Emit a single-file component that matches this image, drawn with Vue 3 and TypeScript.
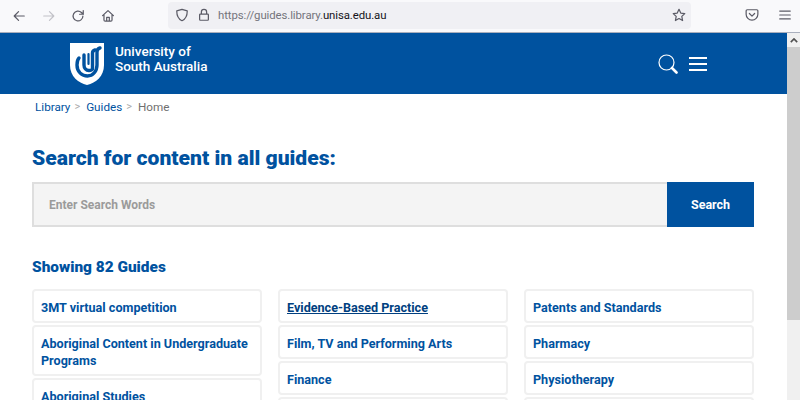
<script setup lang="ts">
const columns: string[][] = [
  ['3MT virtual competition', 'Aboriginal Content in Undergraduate Programs', 'Aboriginal Studies'],
  ['Evidence-Based Practice', 'Film, TV and Performing Arts', 'Finance', 'Fine Arts'],
  ['Patents and Standards', 'Pharmacy', 'Physiotherapy', 'Planning'],
]
</script>

<template>
  <div class="window">
    <div class="toolbar">
      <div class="nav">
        <svg class="ic" viewBox="0 0 16 16"><path d="M14 8H2.500M7.500 3 2.500 8l5 5" /></svg>
        <svg class="ic dim" viewBox="0 0 16 16"><path d="M2 8h11.500M8.500 3l5 5-5 5" /></svg>
        <svg class="ic" viewBox="0 0 16 16"><path d="M13.600 8a5.600 5.600 0 1 1-1.700-4L14 6M14 1.800V6H9.800" /></svg>
        <svg class="ic" viewBox="0 0 16 16"><path d="M1.800 7.600 8 1.800l6.200 5.800M3.400 6.400v6.200c0 .8.500 1.300 1.300 1.300h6.600c.8 0 1.300-.5 1.300-1.300V6.400M6.500 13.800V9.500h3v4.300" /></svg>
      </div>
      <div class="urlbar">
        <svg class="ic shield" viewBox="0 0 16 16"><path d="M8 1.500 14 3.300c0 5.500-1.800 9.200-6 11.200-4.200-2-6-5.700-6-11.200Z" /></svg>
        <svg class="ic lock" viewBox="0 0 16 16"><path d="M5 7V4.500a3 3 0 0 1 6 0V7M3.800 7h8.400c.5 0 .8.300.8.800v5.400c0 .5-.3.800-.8.800H3.800c-.5 0-.8-.3-.8-.8V7.800c0-.5.300-.8.800-.8Z" /></svg>
        <span class="url"><span class="url-dim">https://guides.library.</span>unisa.edu.au</span>
        <svg class="ic star" viewBox="0 0 16 16"><path d="m8 1.500 2 4.300 4.600.6-3.400 3.200.9 4.700L8 12l-4.100 2.300.9-4.700L1.400 6.400 6 5.800Z" /></svg>
      </div>
      <div class="tools">
        <svg class="ic" viewBox="0 0 16 16"><path d="M2.500 2h11c.8 0 1.200.5 1.200 1.200V7c0 3.800-3 6.800-6.700 6.800S1.300 10.800 1.300 7V3.200C1.300 2.500 1.700 2 2.500 2ZM5 6.300l3 3 3-3" /></svg>
        <svg class="ic" viewBox="0 0 16 16"><path d="M2 3.500h12M2 8h12M2 12.500h12" /></svg>
      </div>
    </div>
    <div class="viewport">
      <div class="page">
        <header class="banner">
          <div class="brand">
            <svg class="logo" viewBox="0 0 34 42">
              <path class="shield-mark" d="M0 0H34V22C34 33 26 40 17 42 8 40 0 33 0 22Z" />
              <path class="u-mark" d="M9 15C7 17 7 19 7 22 7 29 12 33 17.500 33 23 33 27 28 27 22V9C27 7 28 5.500 30 5" />
              <path class="u-mark" d="M14 12V22C14 25 16 27.500 19 27.500 20.500 27.500 22 27 22.500 26V10C22.500 8.500 23 7.500 25 7" />
              <path class="u-mark thin" d="M18.500 11V21" />
            </svg>
            <div class="brand-name">University of<br />South Australia</div>
          </div>
          <div class="banner-actions">
            <svg class="banner-search" viewBox="0 0 20 20">
              <circle cx="8.500" cy="8.500" r="7.500" />
              <path class="handle" d="M14 14l4.500 4.500" />
            </svg>
            <div class="burger"><i></i><i></i><i></i></div>
          </div>
        </header>

        <nav class="crumbs">
          <a>Library</a><span class="sep">&gt;</span>
          <a>Guides</a><span class="sep">&gt;</span>
          <span class="here">Home</span>
        </nav>

        <main class="content">
          <h1>Search for content in all guides:</h1>
          <div class="search">
            <div class="field">Enter Search Words</div>
            <div class="go">Search</div>
          </div>
          <h2>Showing 82 Guides</h2>
          <div class="grid">
            <div v-for="(col, i) in columns" :key="i" class="col">
              <a
                v-for="(g, j) in col"
                :key="g"
                class="card"
                :class="{ hot: i === 1 && j === 0 }"
              ><span>{{ g }}</span></a>
            </div>
          </div>
        </main>
      </div>
      <aside class="scrollbar">
        <div class="arrow">
          <svg viewBox="0 0 10 6"><path d="M1 5l4-4 4 4" /></svg>
        </div>
        <div class="thumb"></div>
      </aside>
    </div>
  </div>
</template>

<style>
html, body { margin: 0; overflow: hidden; }
</style>

<style scoped>
.window {
  width: 800px;
  height: 400px;
  display: flex;
  flex-direction: column;
  overflow: hidden;
  background: #fff;
  font-family: Roboto, sans-serif;
}
.toolbar {
  height: 32px;
  flex: none;
  display: flex;
  align-items: center;
  background: #f9f9fb;
  border-bottom: 1px solid #a9afbd;
}
.ic {
  width: 14px;
  height: 14px;
  fill: none;
  stroke: #5b5b66;
  stroke-width: 1.400;
  stroke-linecap: round;
  stroke-linejoin: round;
}
.ic.dim { stroke: #c2c2c8; }
.nav {
  display: flex;
  align-items: center;
  gap: 15.500px;
  padding-left: 12px;
  width: 168px;
  box-sizing: border-box;
  margin-top: -1px;
}
.urlbar {
  width: 523px;
  height: 27px;
  margin-top: -2px;
  flex: none;
  display: flex;
  align-items: center;
  background: #f0f0f4;
  border-radius: 4px;
  box-sizing: border-box;
  padding: 0 5px 0 7px;
}
.shield { margin-right: 8px; }
.lock { margin-right: 7px; }
.url {
  flex: 1;
  font: 11.400px Roboto, sans-serif;
  letter-spacing: -0.100px;
  color: #15141a;
}
.url-dim { color: #74747c; }
.tools {
  display: flex;
  align-items: center;
  gap: 19px;
  padding-left: 54px;
  margin-top: -2px;
}
.viewport {
  flex: 1;
  display: flex;
  min-height: 0;
}
.page {
  flex: 1;
  min-width: 0;
  overflow: hidden;
}
.banner {
  height: 61px;
  background: #00529f;
  display: flex;
  align-items: center;
  justify-content: space-between;
  padding: 0 80px 0 70px;
}
.brand {
  display: flex;
  align-items: center;
  gap: 11px;
}
.logo {
  width: 34px;
  height: 42px;
  display: block;
}
.shield-mark { fill: #fff; }
.u-mark {
  fill: none;
  stroke: #00529f;
  stroke-width: 3.400;
  stroke-linecap: round;
}
.u-mark.thin { stroke-width: 2.200; }
.brand-name {
  color: #fff;
  font: 500 13.500px/15.500px Roboto, sans-serif;
  margin-bottom: 9px;
}
.banner-actions {
  display: flex;
  align-items: center;
  gap: 11px;
}
.banner-search {
  width: 20px;
  height: 20px;
  fill: none;
  stroke: #fff;
  stroke-width: 1.200;
}
.handle { stroke-width: 2.600; stroke-linecap: round; }
.burger {
  width: 18px;
  display: flex;
  flex-direction: column;
  gap: 4px;
}
.burger i {
  display: block;
  height: 2px;
  background: #fff;
}
.crumbs {
  height: 24px;
  padding: 1px 0 0 35px;
  box-sizing: border-box;
  display: flex;
  align-items: center;
  font-size: 11.700px;
  color: #00529f;
}
.sep { color: #a9a9a9; margin: 0 6px 0 4px; font-size: 11px; }
.here { color: #6f6f6f; }
.content { padding: 0 33px 0 32px; }
h1 {
  margin: 26px 0 0;
  font: 900 21.100px/28px Roboto, sans-serif;
  color: #00529f;
}
.search {
  display: flex;
  height: 45px;
  margin-top: 10px;
}
.field {
  flex: 1;
  background: #f4f4f4;
  border: 2px solid #dedede;
  border-right: none;
  padding-left: 15px;
  display: flex;
  align-items: center;
  font-size: 12px;
  font-weight: 700;
  color: #9b9b9b;
}
.go {
  width: 87px;
  background: #00529f;
  color: #fff;
  font-size: 12.500px;
  font-weight: 700;
  display: flex;
  align-items: center;
  justify-content: center;
}
h2 {
  margin: 30px 0 0;
  font: 900 15.400px/20px Roboto, sans-serif;
  color: #00529f;
}
.grid {
  display: grid;
  grid-template-columns: repeat(3, 230px);
  gap: 16px;
  margin-top: 12px;
}
.col {
  display: flex;
  flex-direction: column;
  gap: 2px;
}
.card {
  display: block;
  border: 2px solid #f0f0f0;
  border-radius: 4px;
  padding: 7.500px 7px 5.500px;
  font-size: 12.600px;
  font-weight: 700;
  line-height: 17px;
  color: #00529f;
}
.card.hot span { text-decoration: underline; color: #003f80; }
.scrollbar {
  width: 13px;
  flex: none;
  background: #f0f0f0;
  display: flex;
  flex-direction: column;
}
.arrow {
  height: 14px;
  background: #f0f0f0;
  display: flex;
  align-items: center;
  justify-content: center;
}
.arrow svg {
  width: 8px;
  height: 5px;
  fill: none;
  stroke: #505050;
  stroke-width: 2;
}
.thumb {
  height: 273px;
  background: #cdcdcd;
}
</style>
